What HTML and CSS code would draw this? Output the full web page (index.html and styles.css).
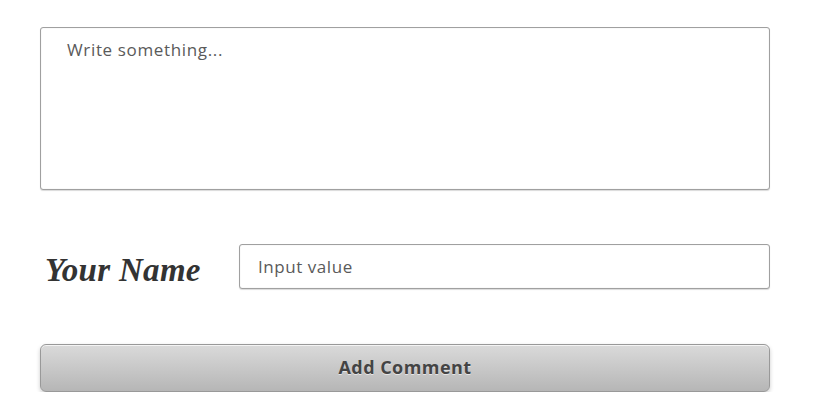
FILE: index.html
```html
<!DOCTYPE html>
<html>
<head>
<meta charset="utf-8">
<link rel="stylesheet" href="styles.css">
</head>
<body>
<form class="comment-form">
  <textarea class="comment-box" placeholder="Write something..."></textarea>
  <div class="name-row">
    <label class="name-label" for="name">Your Name</label>
    <input class="name-input" id="name" type="text" placeholder="Input value">
  </div>
  <button class="submit-btn" type="button">Add Comment</button>
</form>
</body>
</html>
```

FILE: styles.css
```css
html, body {
  margin: 0;
  padding: 0;
  background: #ffffff;
}
.comment-form {
  width: 730px;
  padding: 27px 0 0 40px;
  display: flex;
  flex-direction: column;
  font-family: "Open Sans", sans-serif;
}
.comment-box {
  box-sizing: border-box;
  width: 730px;
  height: 163px;
  margin: 0;
  border: 1px solid #a0a0a0;
  border-radius: 3px;
  box-shadow: inset 0 0 1px rgba(0,0,0,0.2), 0 1px 1px rgba(0,0,0,0.15);
  padding: 10px 26px;
  font-family: "Open Sans", sans-serif;
  font-size: 17px;
  letter-spacing: 0.65px;
  color: #444;
  resize: none;
  outline: none;
}
.comment-box::placeholder,
.name-input::placeholder {
  color: #5a5a5a;
  opacity: 1;
}
.name-row {
  display: flex;
  align-items: center;
  margin-top: 54px;
  height: 45px;
}
.name-label {
  width: 199px;
  padding-left: 5px;
  box-sizing: border-box;
  font-family: "Liberation Serif", serif;
  font-style: italic;
  font-weight: bold;
  font-size: 33px;
  letter-spacing: 0.3px;
  color: #333;
  margin-top: 7px;
}
.name-input {
  box-sizing: border-box;
  flex: 1;
  height: 45px;
  margin: 0;
  border: 1px solid #a0a0a0;
  border-radius: 3px;
  box-shadow: inset 0 0 1px rgba(0,0,0,0.2), 0 1px 1px rgba(0,0,0,0.15);
  padding: 0 18px;
  font-family: "Open Sans", sans-serif;
  font-size: 17px;
  letter-spacing: 0.55px;
  color: #444;
  outline: none;
}
.submit-btn {
  box-sizing: border-box;
  width: 730px;
  height: 48px;
  margin-top: 55px;
  padding: 0 0 3px;
  border: 1px solid #999;
  border-radius: 6px;
  background: linear-gradient(#dadada, #b6b6b6);
  box-shadow: inset 0 1px 0 rgba(255,255,255,0.7), 0 2px 4px rgba(0,0,0,0.2);
  font-family: "Open Sans", sans-serif;
  font-weight: 700;
  font-size: 18px;
  letter-spacing: 0.45px;
  color: #444;
  text-shadow: 0 1px 0 rgba(255,255,255,0.6);
  cursor: pointer;
}
```
